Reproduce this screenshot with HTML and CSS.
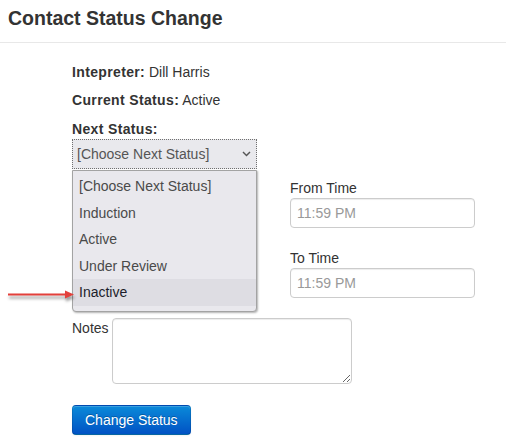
FILE: index.html
```html
<!DOCTYPE html>
<html lang="en">
<head>
<meta charset="utf-8">
<title>Contact Status Change</title>
<link rel="stylesheet" href="styles.css">
</head>
<body>
<header class="page-header">
  <h1 class="title">Contact Status Change</h1>
</header>
<main class="form">
  <p class="info"><strong class="key">Intepreter:</strong> Dill Harris</p>
  <p class="info"><strong class="key">Current Status:</strong> Active</p>
  <div class="field">
    <div class="field-label key">Next Status:</div>
    <div class="select-wrap">
      <div class="select">
        <span class="select-text">[Choose Next Status]</span>
        <svg class="chevron" width="9" height="6" viewBox="0 0 9 6"><polyline points="1,1 4.5,4.6 8,1" fill="none" stroke="#555" stroke-width="1.4"/></svg>
      </div>
      <ul class="dropdown">
        <li class="option">[Choose Next Status]</li>
        <li class="option">Induction</li>
        <li class="option">Active</li>
        <li class="option">Under Review</li>
        <li class="option option-hover">Inactive</li>
      </ul>
    </div>
  </div>
  <div class="grid">
    <div class="col"><div class="lbl"></div><input class="input" type="text"></div>
    <div class="col"><div class="lbl">From Time</div><input class="input" type="text" placeholder="11:59 PM"></div>
    <div class="col"><div class="lbl"></div><input class="input" type="text"></div>
    <div class="col"><div class="lbl">To Time</div><input class="input" type="text" placeholder="11:59 PM"></div>
  </div>
  <div class="notes">
    <label class="notes-label">Notes</label>
    <textarea class="textarea"></textarea>
  </div>
  <button class="btn" type="button">Change Status</button>
</main>
<svg class="arrow" width="80" height="22" viewBox="0 0 80 22">
  <line x1="8" y1="10.5" x2="67" y2="10.5" stroke="#e3403b" stroke-width="2.2"/>
  <polygon points="65,6.5 74,10.5 65,14.5" fill="#e3403b"/>
</svg>
</body>
</html>
```
FILE: styles.css
```css
html, body {
  margin: 0;
  padding: 0;
  background: #fff;
}
body {
  font-family: "Liberation Sans", Arial, sans-serif;
  font-size: 14px;
  line-height: 20px;
  color: #333;
  position: relative;
  width: 506px;
  height: 444px;
  overflow: hidden;
}
.page-header {
  padding: 6px 8px 12px;
  border-bottom: 1px solid #e8e8e8;
}
.title {
  margin: 0;
  font-size: 19.5px;
  line-height: 24px;
  font-weight: bold;
  color: #333;
}
.form {
  padding: 18.5px 0 0 72px;
}
.info {
  margin: 0 0 8.5px;
  height: 20px;
}
.key {
  font-weight: bold;
  letter-spacing: 0.35px;
}
.field-label {
  height: 20px;
}
.select-wrap {
  position: relative;
  width: 185px;
}
.select {
  box-sizing: border-box;
  height: 30px;
  border: 1px dotted #707070;
  background: #e9e9ed;
  display: flex;
  align-items: center;
  justify-content: space-between;
  padding: 0 5px 0 4px;
  color: #555;
}
.chevron {
  display: block;
}
.dropdown {
  position: absolute;
  top: 31px;
  left: 0;
  width: 185px;
  box-sizing: border-box;
  margin: 0;
  padding: 2.5px 0 5.5px;
  list-style: none;
  background: #e9e8ed;
  border: 1px solid #a3a3a3;
  border-radius: 0 0 4px 4px;
  box-shadow: 1px 1px 2px rgba(0, 0, 0, 0.3);
  z-index: 5;
}
.option {
  height: 26.5px;
  line-height: 26.5px;
  padding-left: 6px;
  color: #4a4a4a;
}
.option-hover {
  background: #dedde3;
  color: #1d1d2b;
}
.grid {
  margin-top: 10.5px;
  display: grid;
  grid-template-columns: 185px 185px;
  column-gap: 33px;
  row-gap: 21px;
}
.col {
  display: flex;
  flex-direction: column;
}
.lbl {
  height: 19px;
  line-height: 19px;
}
.input {
  box-sizing: border-box;
  width: 185px;
  height: 30px;
  margin: 0;
  padding: 4px 6px;
  font-family: "Liberation Sans", Arial, sans-serif;
  font-size: 14px;
  line-height: 20px;
  color: #555;
  background: #fff;
  border: 1px solid #ccc;
  border-radius: 4px;
  box-shadow: inset 0 1px 1px rgba(0, 0, 0, 0.075);
  outline: none;
}
.input::placeholder {
  color: #999;
}
.notes {
  margin-top: 20px;
  display: flex;
  align-items: flex-start;
}
.notes-label {
  width: 40px;
  line-height: 20px;
}
.textarea {
  box-sizing: border-box;
  width: 240px;
  height: 66px;
  margin: 0;
  padding: 4px 6px;
  border: 1px solid #ccc;
  border-radius: 4px;
  box-shadow: inset 0 1px 1px rgba(0, 0, 0, 0.075);
  font-family: "Liberation Sans", Arial, sans-serif;
  font-size: 14px;
  outline: none;
}
.btn {
  display: block;
  margin-top: 21px;
  box-sizing: border-box;
  height: 30px;
  padding: 4px 12px;
  font-family: "Liberation Sans", Arial, sans-serif;
  font-size: 14px;
  line-height: 20px;
  color: #fff;
  text-shadow: 0 -1px 0 rgba(0, 0, 0, 0.25);
  background-color: #0062cc;
  background-image: linear-gradient(to bottom, #0a8ad9, #0152c4);
  border: 1px solid;
  border-color: rgba(0, 0, 0, 0.1) rgba(0, 0, 0, 0.1) rgba(0, 0, 0, 0.25);
  border-radius: 4px;
  box-shadow: inset 0 1px 0 rgba(255, 255, 255, 0.2), 0 1px 2px rgba(0, 0, 0, 0.05);
}
.arrow {
  position: absolute;
  left: 0;
  top: 284px;
  filter: drop-shadow(1px 3px 1.5px rgba(0, 0, 0, 0.4));
  z-index: 6;
}
```
